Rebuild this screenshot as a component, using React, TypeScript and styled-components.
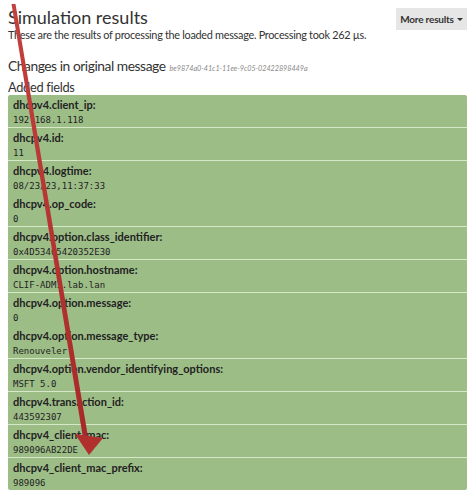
import React from "react";
import styled, { createGlobalStyle } from "styled-components";

const Global = createGlobalStyle`
  html, body { margin: 0; padding: 0; background: #ffffff; }
  body { font-family: Lato, "Noto Sans", sans-serif; color: #333333; }
`;

const Page = styled.div`
  position: relative;
  padding: 6px 7px 0 8px;
  width: 474px;
  height: 496px;
  box-sizing: border-box;
  overflow: hidden;
`;

const Header = styled.div`
  display: flex;
  justify-content: space-between;
  align-items: flex-start;
`;

const TitleBlock = styled.div`
  display: flex;
  flex-direction: column;
`;

const Title = styled.h1`
  margin: 0;
  font-size: 18px;
  font-weight: 400;
  line-height: 22px;
  color: #333;
`;

const Subtitle = styled.p`
  margin: 0;
  font-size: 10.9px;
  letter-spacing: -0.3px;
  line-height: 14px;
  color: #333;
  white-space: nowrap;
`;

const MoreButton = styled.button`
  margin-top: 2px;
  border: none;
  background: #e6e6e6;
  color: #333;
  font-family: Lato, "Noto Sans", sans-serif;
  font-weight: 700;
  font-size: 10px;
  letter-spacing: -0.2px;
  height: 22px;
  width: 71px;
  padding: 0;
  display: flex;
  align-items: center;
  justify-content: center;
  gap: 3px;
`;

const Caret = styled.span`
  width: 0;
  height: 0;
  border-left: 3px solid transparent;
  border-right: 3px solid transparent;
  border-top: 3px solid #333;
  margin-top: 1px;
`;

const SectionTitle = styled.h2`
  margin: 14px 0 0 0;
  font-size: 13.8px;
  letter-spacing: -0.45px;
  font-weight: 400;
  line-height: 20px;
  color: #333;
  display: flex;
  align-items: baseline;
  gap: 4px;
`;

const Uuid = styled.small`
  font-size: 7.2px;
  letter-spacing: 0;
  font-style: italic;
  color: #888;
`;

const SubHeading = styled.h3`
  margin: 1px 0 0 0;
  font-size: 12.8px;
  letter-spacing: -0.3px;
  font-weight: 400;
  line-height: 15px;
  color: #333;
`;

const FieldList = styled.div`
  margin-top: 0;
  background: #9dbd87;
  border-radius: 2px;
  display: flex;
  flex-direction: column;
`;

const Field = styled.div<{ $sep: boolean }>`
  height: 33px;
  box-sizing: border-box;
  padding: 3px 5px 0 5px;
  border-top: 1px solid ${(p) => (p.$sep ? "#d6e8c8" : "#9dbd87")};
  &:first-child { border-top: none; height: 32px; }
`;

const Label = styled.div`
  font-weight: 700;
  font-size: 11px;
  line-height: 13px;
  color: #222;
`;

const Value = styled.div`
  margin-top: 1px;
  font-family: "DejaVu Sans Mono", monospace;
  font-size: 9px;
  line-height: 16px;
  color: #222;
`;

const Overlay = styled.svg`
  position: absolute;
  left: 0;
  top: 0;
  pointer-events: none;
`;

const fields: { k: string; v: string; sep: boolean }[] = [
  { k: "dhcpv4.client_ip:", v: "192.168.1.118", sep: false },
  { k: "dhcpv4.id:", v: "11", sep: true },
  { k: "dhcpv4.logtime:", v: "08/23/23,11:37:33", sep: true },
  { k: "dhcpv4.op_code:", v: "0", sep: false },
  { k: "dhcpv4.option.class_identifier:", v: "0x4D53465420352E30", sep: true },
  { k: "dhcpv4.option.hostname:", v: "CLIF-ADM1.lab.lan", sep: true },
  { k: "dhcpv4.option.message:", v: "0", sep: true },
  { k: "dhcpv4.option.message_type:", v: "Renouveler", sep: false },
  { k: "dhcpv4.option.vendor_identifying_options:", v: "MSFT 5.0", sep: true },
  { k: "dhcpv4.transaction_id:", v: "443592307", sep: true },
  { k: "dhcpv4_client_mac:", v: "989096AB22DE", sep: true },
  { k: "dhcpv4_client_mac_prefix:", v: "989096", sep: true },
];

export default function App() {
  return (
    <Page>
      <Global />
      <Header>
        <TitleBlock>
          <Title>Simulation results</Title>
          <Subtitle>
            These are the results of processing the loaded message. Processing took 262 µs.
          </Subtitle>
        </TitleBlock>
        <MoreButton>
          More results <Caret />
        </MoreButton>
      </Header>
      <SectionTitle>
        Changes in original message <Uuid>be9874a0-41c1-11ee-9c05-02422898449a</Uuid>
      </SectionTitle>
      <SubHeading>Added fields</SubHeading>
      <FieldList>
        {fields.map((f) => (
          <Field key={f.k} $sep={f.sep}>
            <Label>{f.k}</Label>
            <Value>{f.v}</Value>
          </Field>
        ))}
      </FieldList>
      <Overlay width={474} height={496} viewBox="0 0 474 496">
        <defs>
          <linearGradient id="ar" x1="0" y1="0" x2="1" y2="0">
            <stop offset="0" stopColor="#c4423e" />
            <stop offset="1" stopColor="#a52828" />
          </linearGradient>
        </defs>
        <path d="M11.5 4 L15.5 4 L88 437 L83 438 Z" fill="url(#ar)" />
        <polygon points="75,434 103,438 89,455" fill="#b0302d" />
      </Overlay>
    </Page>
  );
}
